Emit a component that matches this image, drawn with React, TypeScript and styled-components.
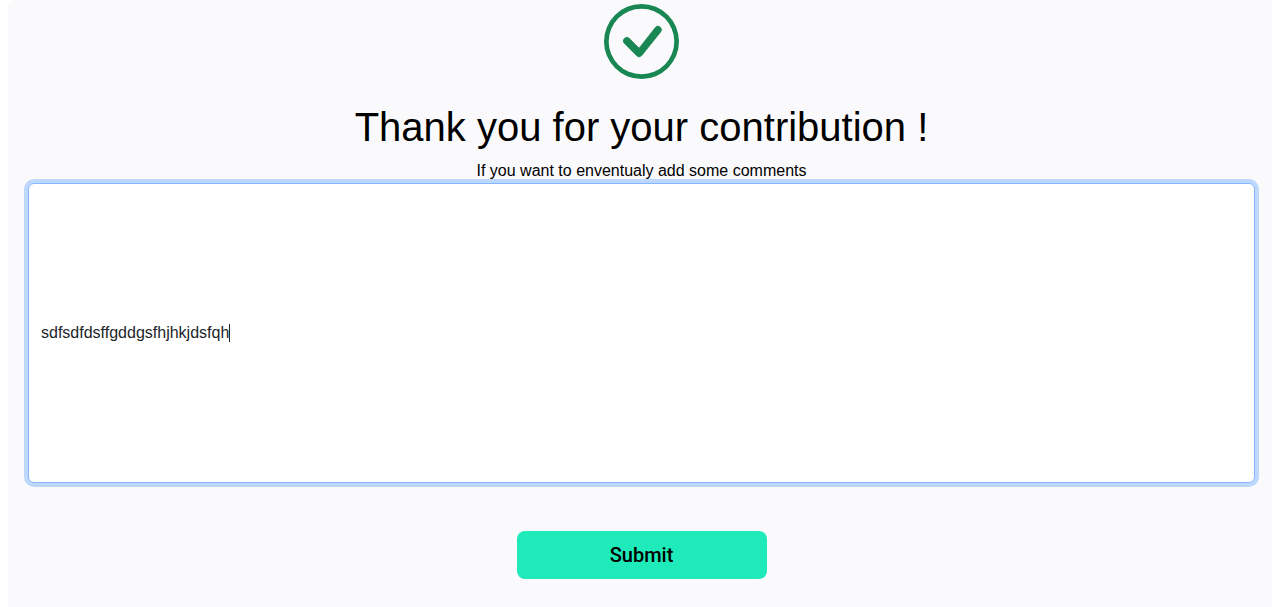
import React, { useState } from "react";
import styled, { createGlobalStyle } from "styled-components";

const GlobalStyle = createGlobalStyle`
  *, *::before, *::after { box-sizing: border-box; }
  body {
    margin: 0;
    background: #ffffff;
    color: #000000;
    font-family: "Liberation Sans", Arial, sans-serif;
    font-size: 16px;
    line-height: 24px;
  }
`;

const Panel = styled.main`
  min-height: 100vh;
  margin-left: 8px;
  padding: 4px 17px 28px 20px;
  border-top-left-radius: 8px;
  background: #fafafc;
`;

const Form = styled.form`
  display: flex;
  flex-direction: column;
  align-items: center;
`;

const CheckIcon = styled.svg`
  width: 75px;
  height: 75px;
  fill: #198754;
`;

const Title = styled.h1`
  margin: 24px 0 8px;
  font-size: 40px;
  font-weight: 400;
  line-height: 48px;
  text-align: center;
`;

const Label = styled.label`
  text-align: center;
`;

const Field = styled.div`
  position: relative;
  display: flex;
  width: 100%;
`;

const CommentInput = styled.input`
  width: 100%;
  height: 300px;
  padding: 6px 12px;
  border: 1px solid #86b7fe;
  border-radius: 6px;
  outline: 0;
  background: #ffffff;
  color: #212529;
  font: inherit;
  caret-color: transparent;
  box-shadow: 0 0 0 4px rgba(13, 110, 253, 0.25);
`;

const Caret = styled.span`
  position: absolute;
  top: 0;
  bottom: 0;
  left: 201px;
  width: 1px;
  height: 18px;
  margin: auto 0;
  background: #212529;
  pointer-events: none;
`;

const SubmitButton = styled.button`
  width: 250px;
  height: 48px;
  margin-top: 48px;
  border: 0;
  border-radius: 8px;
  background: #1eebb9;
  color: #000000;
  font-family: Roboto, sans-serif;
  font-size: 20px;
  font-weight: 500;
  line-height: 24px;
  cursor: pointer;
`;

const initialComment = "sdfsdfdsffgddgsfhjhkjdsfqh";

export default function App() {
  const [comment, setComment] = useState(initialComment);

  return (
    <>
      <GlobalStyle />
      <Panel>
        <Form onSubmit={(event) => event.preventDefault()}>
          <CheckIcon viewBox="0 0 16 16" aria-hidden="true">
            <path d="M8 15A7 7 0 1 1 8 1a7 7 0 0 1 0 14zm0 1A8 8 0 1 0 8 0a8 8 0 0 0 0 16z" />
            <path
              stroke="#198754"
              strokeWidth="0.15"
              strokeLinejoin="round"
              d="M10.97 4.97a.235.235 0 0 0-.02.022L7.477 9.417 5.384 7.323a.75.75 0 0 0-1.06 1.06L6.97 11.03a.75.75 0 0 0 1.079-.02l3.992-4.99a.75.75 0 0 0-1.071-1.05z"
            />
          </CheckIcon>
          <Title>Thank you for your contribution !</Title>
          <Label htmlFor="comment">If you want to enventualy add some comments</Label>
          <Field>
            <CommentInput
              id="comment"
              type="text"
              value={comment}
              onChange={(event) => setComment(event.target.value)}
            />
            {comment === initialComment && <Caret aria-hidden="true" />}
          </Field>
          <SubmitButton type="submit">Submit</SubmitButton>
        </Form>
      </Panel>
    </>
  );
}
